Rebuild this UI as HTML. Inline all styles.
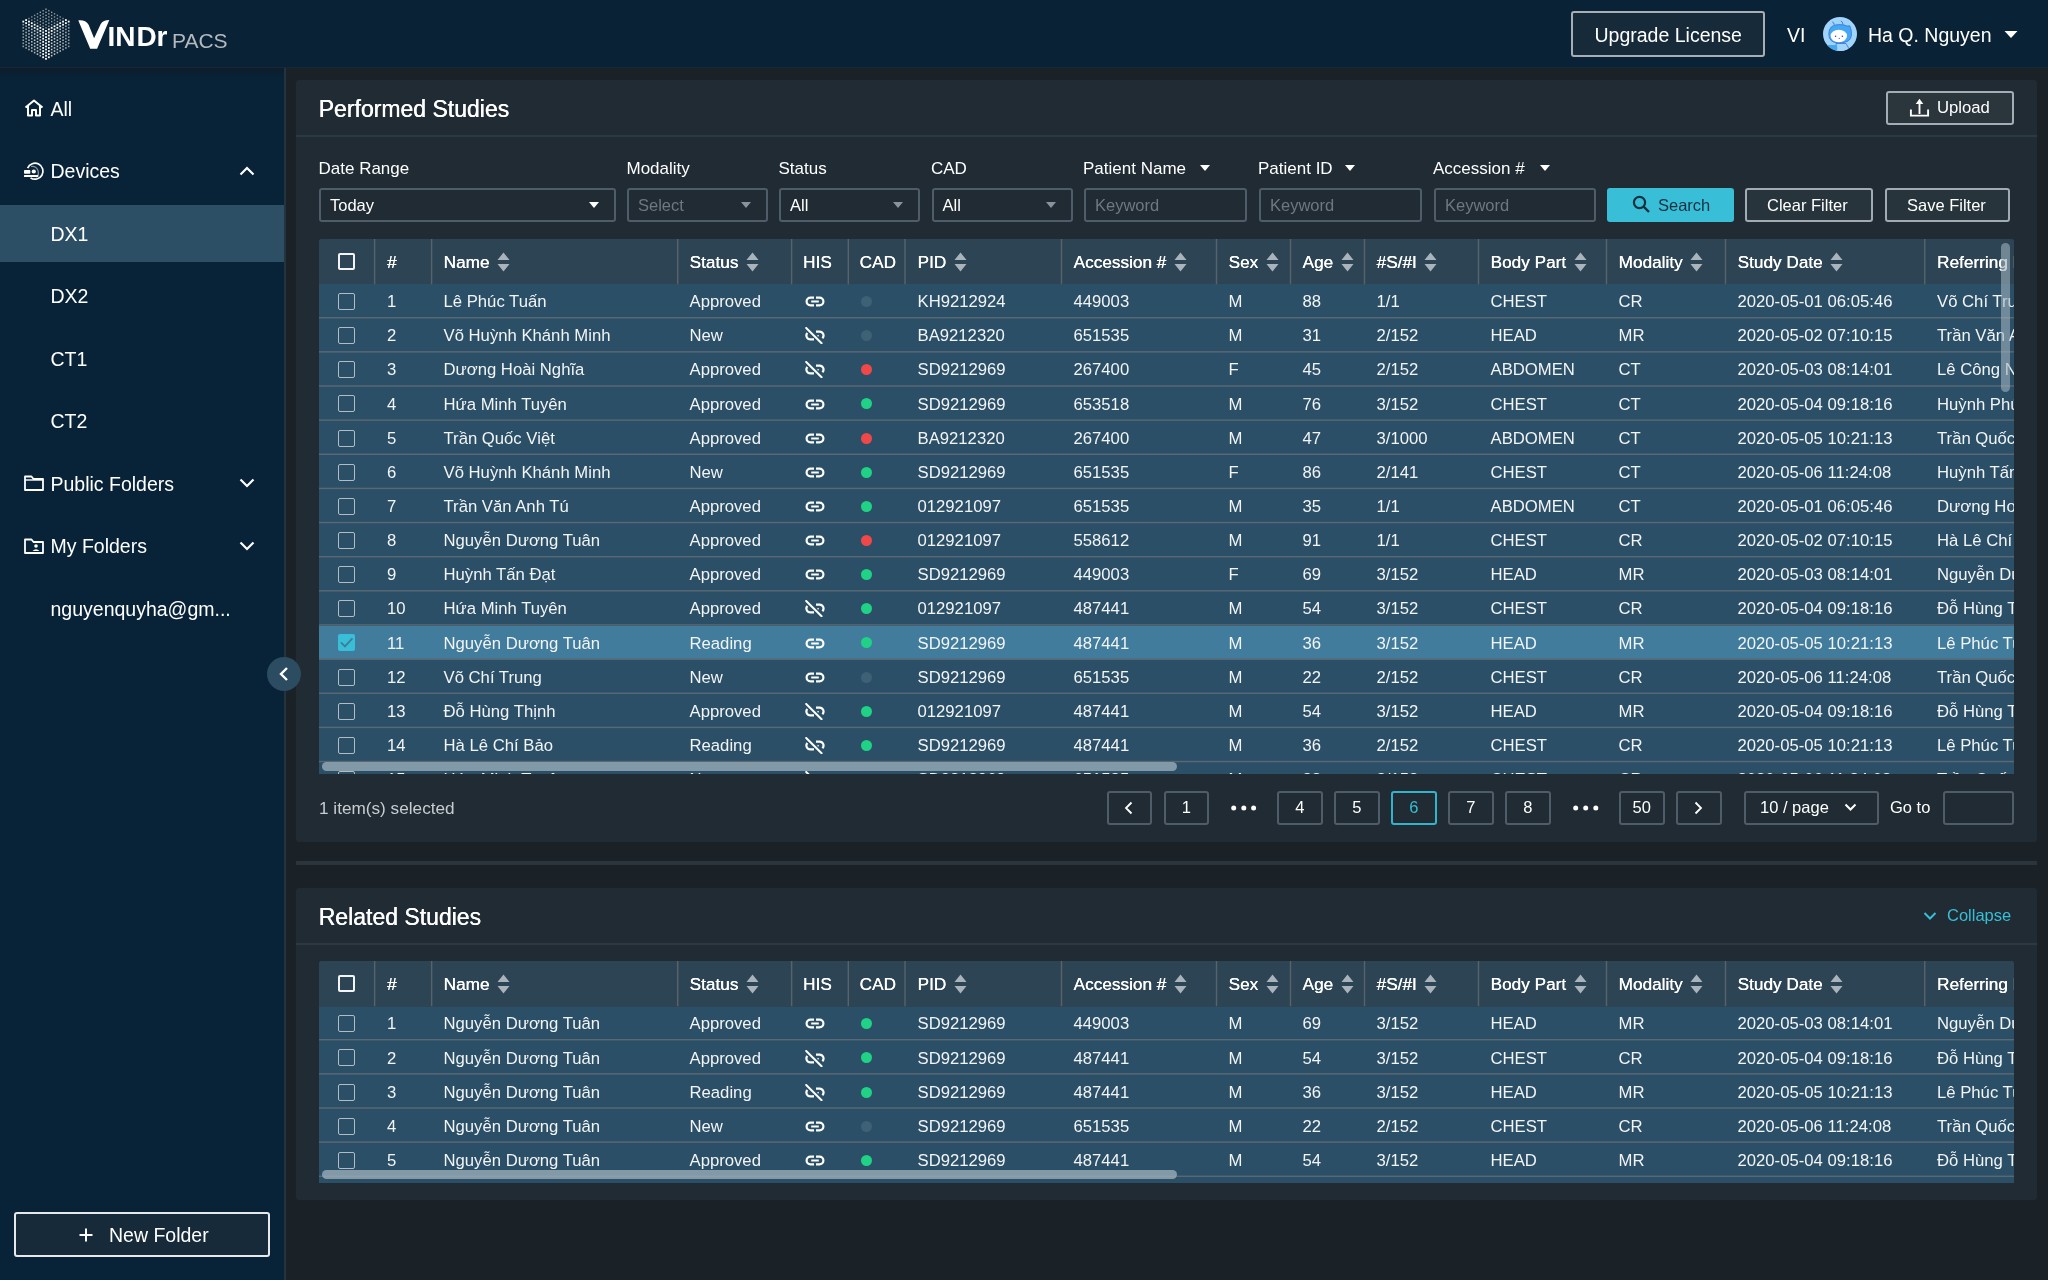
<!DOCTYPE html><html><head><meta charset="utf-8"><title>VinDr PACS</title><style>
*{box-sizing:border-box;margin:0;padding:0}
html,body{width:2048px;height:1280px;overflow:hidden;background:#1a2127;font-family:'Liberation Sans',sans-serif;color:#f2f4f6}
.a{position:absolute}
.t{position:absolute;white-space:nowrap;line-height:20px}
.hc{position:absolute;display:flex;align-items:center;white-space:nowrap;font-size:17.2px;text-shadow:0.35px 0 0 #fff;font-weight:400;color:#fff;line-height:20px}
.hc svg{margin-left:7.8px;flex:none}
.bt{position:absolute;white-space:nowrap;font-size:16.7px;line-height:20px;color:#f2f4f6}
</style></head><body><div id="root" style="position:absolute;left:0;top:0;width:2048px;height:1280px;overflow:hidden;will-change:transform"><div class="a" style="left:0;top:0;width:2048px;height:68px;background:#0a2235;border-bottom:1px solid #13293a"></div>
<svg class="a" style="left:0;top:0" width="80" height="68" viewBox="0 0 80 68"><rect x="22.38" y="20.70" width="1.80" height="1.80" fill="#fff" fill-opacity="1.00"/><rect x="22.48" y="23.90" width="1.60" height="1.60" fill="#fff" fill-opacity="0.56"/><rect x="22.48" y="27.00" width="1.60" height="1.60" fill="#fff" fill-opacity="0.55"/><rect x="22.48" y="30.10" width="1.60" height="1.60" fill="#fff" fill-opacity="0.55"/><rect x="22.48" y="33.20" width="1.60" height="1.60" fill="#fff" fill-opacity="0.55"/><rect x="22.48" y="36.30" width="1.60" height="1.60" fill="#fff" fill-opacity="0.55"/><rect x="22.48" y="39.40" width="1.60" height="1.60" fill="#fff" fill-opacity="0.55"/><rect x="22.48" y="42.50" width="1.60" height="1.60" fill="#fff" fill-opacity="0.55"/><rect x="22.48" y="45.60" width="1.60" height="1.60" fill="#fff" fill-opacity="0.55"/><rect x="25.22" y="19.15" width="1.80" height="1.80" fill="#fff" fill-opacity="1.00"/><rect x="25.22" y="22.25" width="1.80" height="1.80" fill="#fff" fill-opacity="1.00"/><rect x="25.32" y="25.45" width="1.60" height="1.60" fill="#fff" fill-opacity="0.61"/><rect x="25.32" y="28.55" width="1.60" height="1.60" fill="#fff" fill-opacity="0.60"/><rect x="25.32" y="31.65" width="1.60" height="1.60" fill="#fff" fill-opacity="0.60"/><rect x="25.32" y="34.75" width="1.60" height="1.60" fill="#fff" fill-opacity="0.60"/><rect x="25.32" y="37.85" width="1.60" height="1.60" fill="#fff" fill-opacity="0.60"/><rect x="25.32" y="40.95" width="1.60" height="1.60" fill="#fff" fill-opacity="0.59"/><rect x="25.32" y="44.05" width="1.60" height="1.60" fill="#fff" fill-opacity="0.59"/><rect x="25.32" y="47.15" width="1.60" height="1.60" fill="#fff" fill-opacity="0.59"/><rect x="28.26" y="17.80" width="1.40" height="1.40" fill="#fff" fill-opacity="0.49"/><rect x="28.06" y="20.70" width="1.80" height="1.80" fill="#fff" fill-opacity="1.00"/><rect x="28.06" y="23.80" width="1.80" height="1.80" fill="#fff" fill-opacity="1.00"/><rect x="28.16" y="27.00" width="1.60" height="1.60" fill="#fff" fill-opacity="0.66"/><rect x="28.16" y="30.10" width="1.60" height="1.60" fill="#fff" fill-opacity="0.65"/><rect x="28.16" y="33.20" width="1.60" height="1.60" fill="#fff" fill-opacity="0.65"/><rect x="28.16" y="36.30" width="1.60" height="1.60" fill="#fff" fill-opacity="0.64"/><rect x="28.16" y="39.40" width="1.60" height="1.60" fill="#fff" fill-opacity="0.64"/><rect x="28.16" y="42.50" width="1.60" height="1.60" fill="#fff" fill-opacity="0.63"/><rect x="28.16" y="45.60" width="1.60" height="1.60" fill="#fff" fill-opacity="0.63"/><rect x="28.16" y="48.70" width="1.60" height="1.60" fill="#fff" fill-opacity="0.62"/><rect x="31.10" y="16.25" width="1.40" height="1.40" fill="#fff" fill-opacity="0.51"/><rect x="31.10" y="19.35" width="1.40" height="1.40" fill="#fff" fill-opacity="0.51"/><rect x="30.90" y="22.25" width="1.80" height="1.80" fill="#fff" fill-opacity="1.00"/><rect x="30.90" y="25.35" width="1.80" height="1.80" fill="#fff" fill-opacity="1.00"/><rect x="31.00" y="28.55" width="1.60" height="1.60" fill="#fff" fill-opacity="0.71"/><rect x="31.00" y="31.65" width="1.60" height="1.60" fill="#fff" fill-opacity="0.70"/><rect x="31.00" y="34.75" width="1.60" height="1.60" fill="#fff" fill-opacity="0.69"/><rect x="31.00" y="37.85" width="1.60" height="1.60" fill="#fff" fill-opacity="0.69"/><rect x="31.00" y="40.95" width="1.60" height="1.60" fill="#fff" fill-opacity="0.68"/><rect x="31.00" y="44.05" width="1.60" height="1.60" fill="#fff" fill-opacity="0.67"/><rect x="31.00" y="47.15" width="1.60" height="1.60" fill="#fff" fill-opacity="0.66"/><rect x="31.00" y="50.25" width="1.60" height="1.60" fill="#fff" fill-opacity="0.65"/><rect x="33.94" y="14.70" width="1.40" height="1.40" fill="#fff" fill-opacity="0.53"/><rect x="33.94" y="17.80" width="1.40" height="1.40" fill="#fff" fill-opacity="0.53"/><rect x="33.94" y="20.90" width="1.40" height="1.40" fill="#fff" fill-opacity="0.53"/><rect x="33.74" y="23.80" width="1.80" height="1.80" fill="#fff" fill-opacity="1.00"/><rect x="33.74" y="26.90" width="1.80" height="1.80" fill="#fff" fill-opacity="1.00"/><rect x="33.84" y="30.10" width="1.60" height="1.60" fill="#fff" fill-opacity="0.76"/><rect x="33.84" y="33.20" width="1.60" height="1.60" fill="#fff" fill-opacity="0.75"/><rect x="33.84" y="36.30" width="1.60" height="1.60" fill="#fff" fill-opacity="0.74"/><rect x="33.84" y="39.40" width="1.60" height="1.60" fill="#fff" fill-opacity="0.73"/><rect x="33.84" y="42.50" width="1.60" height="1.60" fill="#fff" fill-opacity="0.72"/><rect x="33.84" y="45.60" width="1.60" height="1.60" fill="#fff" fill-opacity="0.71"/><rect x="33.84" y="48.70" width="1.60" height="1.60" fill="#fff" fill-opacity="0.70"/><rect x="33.84" y="51.80" width="1.60" height="1.60" fill="#fff" fill-opacity="0.69"/><rect x="36.78" y="13.15" width="1.40" height="1.40" fill="#fff" fill-opacity="0.54"/><rect x="36.78" y="16.25" width="1.40" height="1.40" fill="#fff" fill-opacity="0.54"/><rect x="36.78" y="19.35" width="1.40" height="1.40" fill="#fff" fill-opacity="0.54"/><rect x="36.78" y="22.45" width="1.40" height="1.40" fill="#fff" fill-opacity="0.54"/><rect x="36.58" y="25.35" width="1.80" height="1.80" fill="#fff" fill-opacity="1.00"/><rect x="36.58" y="28.45" width="1.80" height="1.80" fill="#fff" fill-opacity="1.00"/><rect x="36.68" y="31.65" width="1.60" height="1.60" fill="#fff" fill-opacity="0.81"/><rect x="36.68" y="34.75" width="1.60" height="1.60" fill="#fff" fill-opacity="0.80"/><rect x="36.68" y="37.85" width="1.60" height="1.60" fill="#fff" fill-opacity="0.78"/><rect x="36.68" y="40.95" width="1.60" height="1.60" fill="#fff" fill-opacity="0.77"/><rect x="36.68" y="44.05" width="1.60" height="1.60" fill="#fff" fill-opacity="0.76"/><rect x="36.68" y="47.15" width="1.60" height="1.60" fill="#fff" fill-opacity="0.75"/><rect x="36.68" y="50.25" width="1.60" height="1.60" fill="#fff" fill-opacity="0.73"/><rect x="36.68" y="53.35" width="1.60" height="1.60" fill="#fff" fill-opacity="0.72"/><rect x="39.62" y="11.60" width="1.40" height="1.40" fill="#fff" fill-opacity="0.56"/><rect x="39.62" y="14.70" width="1.40" height="1.40" fill="#fff" fill-opacity="0.56"/><rect x="39.62" y="17.80" width="1.40" height="1.40" fill="#fff" fill-opacity="0.56"/><rect x="39.62" y="20.90" width="1.40" height="1.40" fill="#fff" fill-opacity="0.56"/><rect x="39.62" y="24.00" width="1.40" height="1.40" fill="#fff" fill-opacity="0.56"/><rect x="39.42" y="26.90" width="1.80" height="1.80" fill="#fff" fill-opacity="1.00"/><rect x="39.42" y="30.00" width="1.80" height="1.80" fill="#fff" fill-opacity="1.00"/><rect x="39.52" y="33.20" width="1.60" height="1.60" fill="#fff" fill-opacity="0.86"/><rect x="39.52" y="36.30" width="1.60" height="1.60" fill="#fff" fill-opacity="0.85"/><rect x="39.52" y="39.40" width="1.60" height="1.60" fill="#fff" fill-opacity="0.83"/><rect x="39.52" y="42.50" width="1.60" height="1.60" fill="#fff" fill-opacity="0.81"/><rect x="39.52" y="45.60" width="1.60" height="1.60" fill="#fff" fill-opacity="0.80"/><rect x="39.52" y="48.70" width="1.60" height="1.60" fill="#fff" fill-opacity="0.78"/><rect x="39.52" y="51.80" width="1.60" height="1.60" fill="#fff" fill-opacity="0.77"/><rect x="39.52" y="54.90" width="1.60" height="1.60" fill="#fff" fill-opacity="0.75"/><rect x="42.46" y="10.05" width="1.40" height="1.40" fill="#fff" fill-opacity="0.58"/><rect x="42.46" y="13.15" width="1.40" height="1.40" fill="#fff" fill-opacity="0.58"/><rect x="42.46" y="16.25" width="1.40" height="1.40" fill="#fff" fill-opacity="0.58"/><rect x="42.46" y="19.35" width="1.40" height="1.40" fill="#fff" fill-opacity="0.58"/><rect x="42.46" y="22.45" width="1.40" height="1.40" fill="#fff" fill-opacity="0.58"/><rect x="42.46" y="25.55" width="1.40" height="1.40" fill="#fff" fill-opacity="0.58"/><rect x="42.26" y="28.45" width="1.80" height="1.80" fill="#fff" fill-opacity="1.00"/><rect x="42.26" y="31.55" width="1.80" height="1.80" fill="#fff" fill-opacity="1.00"/><rect x="42.26" y="34.65" width="1.80" height="1.80" fill="#fff" fill-opacity="1.00"/><rect x="42.26" y="37.75" width="1.80" height="1.80" fill="#fff" fill-opacity="1.00"/><rect x="42.26" y="40.85" width="1.80" height="1.80" fill="#fff" fill-opacity="1.00"/><rect x="42.26" y="43.95" width="1.80" height="1.80" fill="#fff" fill-opacity="1.00"/><rect x="42.26" y="47.05" width="1.80" height="1.80" fill="#fff" fill-opacity="1.00"/><rect x="42.26" y="50.15" width="1.80" height="1.80" fill="#fff" fill-opacity="1.00"/><rect x="42.26" y="53.25" width="1.80" height="1.80" fill="#fff" fill-opacity="1.00"/><rect x="42.26" y="56.35" width="1.80" height="1.80" fill="#fff" fill-opacity="1.00"/><rect x="45.30" y="8.50" width="1.40" height="1.40" fill="#fff" fill-opacity="0.60"/><rect x="45.30" y="11.60" width="1.40" height="1.40" fill="#fff" fill-opacity="0.60"/><rect x="45.30" y="14.70" width="1.40" height="1.40" fill="#fff" fill-opacity="0.60"/><rect x="45.30" y="17.80" width="1.40" height="1.40" fill="#fff" fill-opacity="0.60"/><rect x="45.30" y="20.90" width="1.40" height="1.40" fill="#fff" fill-opacity="0.60"/><rect x="45.30" y="24.00" width="1.40" height="1.40" fill="#fff" fill-opacity="0.60"/><rect x="45.30" y="27.10" width="1.40" height="1.40" fill="#fff" fill-opacity="0.60"/><rect x="45.10" y="30.00" width="1.80" height="1.80" fill="#fff" fill-opacity="1.00"/><rect x="45.10" y="33.10" width="1.80" height="1.80" fill="#fff" fill-opacity="1.00"/><rect x="45.10" y="36.20" width="1.80" height="1.80" fill="#fff" fill-opacity="1.00"/><rect x="45.10" y="39.30" width="1.80" height="1.80" fill="#fff" fill-opacity="1.00"/><rect x="45.10" y="42.40" width="1.80" height="1.80" fill="#fff" fill-opacity="1.00"/><rect x="45.10" y="45.50" width="1.80" height="1.80" fill="#fff" fill-opacity="1.00"/><rect x="45.10" y="48.60" width="1.80" height="1.80" fill="#fff" fill-opacity="1.00"/><rect x="45.10" y="51.70" width="1.80" height="1.80" fill="#fff" fill-opacity="1.00"/><rect x="45.10" y="54.80" width="1.80" height="1.80" fill="#fff" fill-opacity="1.00"/><rect x="45.10" y="57.90" width="1.80" height="1.80" fill="#fff" fill-opacity="1.00"/><rect x="48.14" y="10.05" width="1.40" height="1.40" fill="#fff" fill-opacity="0.58"/><rect x="48.14" y="13.15" width="1.40" height="1.40" fill="#fff" fill-opacity="0.58"/><rect x="48.14" y="16.25" width="1.40" height="1.40" fill="#fff" fill-opacity="0.58"/><rect x="48.14" y="19.35" width="1.40" height="1.40" fill="#fff" fill-opacity="0.58"/><rect x="48.14" y="22.45" width="1.40" height="1.40" fill="#fff" fill-opacity="0.58"/><rect x="48.14" y="25.55" width="1.40" height="1.40" fill="#fff" fill-opacity="0.58"/><rect x="47.94" y="28.45" width="1.80" height="1.80" fill="#fff" fill-opacity="1.00"/><rect x="47.94" y="31.55" width="1.80" height="1.80" fill="#fff" fill-opacity="1.00"/><rect x="47.94" y="34.65" width="1.80" height="1.80" fill="#fff" fill-opacity="1.00"/><rect x="47.94" y="37.75" width="1.80" height="1.80" fill="#fff" fill-opacity="1.00"/><rect x="47.94" y="40.85" width="1.80" height="1.80" fill="#fff" fill-opacity="1.00"/><rect x="47.94" y="43.95" width="1.80" height="1.80" fill="#fff" fill-opacity="1.00"/><rect x="47.94" y="47.05" width="1.80" height="1.80" fill="#fff" fill-opacity="1.00"/><rect x="47.94" y="50.15" width="1.80" height="1.80" fill="#fff" fill-opacity="1.00"/><rect x="47.94" y="53.25" width="1.80" height="1.80" fill="#fff" fill-opacity="1.00"/><rect x="47.94" y="56.35" width="1.80" height="1.80" fill="#fff" fill-opacity="1.00"/><rect x="50.98" y="11.60" width="1.40" height="1.40" fill="#fff" fill-opacity="0.56"/><rect x="50.98" y="14.70" width="1.40" height="1.40" fill="#fff" fill-opacity="0.56"/><rect x="50.98" y="17.80" width="1.40" height="1.40" fill="#fff" fill-opacity="0.56"/><rect x="50.98" y="20.90" width="1.40" height="1.40" fill="#fff" fill-opacity="0.56"/><rect x="50.98" y="24.00" width="1.40" height="1.40" fill="#fff" fill-opacity="0.56"/><rect x="50.78" y="26.90" width="1.80" height="1.80" fill="#fff" fill-opacity="1.00"/><rect x="50.78" y="30.00" width="1.80" height="1.80" fill="#fff" fill-opacity="1.00"/><rect x="50.88" y="33.20" width="1.60" height="1.60" fill="#fff" fill-opacity="0.86"/><rect x="50.88" y="36.30" width="1.60" height="1.60" fill="#fff" fill-opacity="0.85"/><rect x="50.88" y="39.40" width="1.60" height="1.60" fill="#fff" fill-opacity="0.83"/><rect x="50.88" y="42.50" width="1.60" height="1.60" fill="#fff" fill-opacity="0.81"/><rect x="50.88" y="45.60" width="1.60" height="1.60" fill="#fff" fill-opacity="0.80"/><rect x="50.88" y="48.70" width="1.60" height="1.60" fill="#fff" fill-opacity="0.78"/><rect x="50.88" y="51.80" width="1.60" height="1.60" fill="#fff" fill-opacity="0.77"/><rect x="50.88" y="54.90" width="1.60" height="1.60" fill="#fff" fill-opacity="0.75"/><rect x="53.82" y="13.15" width="1.40" height="1.40" fill="#fff" fill-opacity="0.54"/><rect x="53.82" y="16.25" width="1.40" height="1.40" fill="#fff" fill-opacity="0.54"/><rect x="53.82" y="19.35" width="1.40" height="1.40" fill="#fff" fill-opacity="0.54"/><rect x="53.82" y="22.45" width="1.40" height="1.40" fill="#fff" fill-opacity="0.54"/><rect x="53.62" y="25.35" width="1.80" height="1.80" fill="#fff" fill-opacity="1.00"/><rect x="53.62" y="28.45" width="1.80" height="1.80" fill="#fff" fill-opacity="1.00"/><rect x="53.72" y="31.65" width="1.60" height="1.60" fill="#fff" fill-opacity="0.81"/><rect x="53.72" y="34.75" width="1.60" height="1.60" fill="#fff" fill-opacity="0.80"/><rect x="53.72" y="37.85" width="1.60" height="1.60" fill="#fff" fill-opacity="0.78"/><rect x="53.72" y="40.95" width="1.60" height="1.60" fill="#fff" fill-opacity="0.77"/><rect x="53.72" y="44.05" width="1.60" height="1.60" fill="#fff" fill-opacity="0.76"/><rect x="53.72" y="47.15" width="1.60" height="1.60" fill="#fff" fill-opacity="0.75"/><rect x="53.72" y="50.25" width="1.60" height="1.60" fill="#fff" fill-opacity="0.73"/><rect x="53.72" y="53.35" width="1.60" height="1.60" fill="#fff" fill-opacity="0.72"/><rect x="56.66" y="14.70" width="1.40" height="1.40" fill="#fff" fill-opacity="0.53"/><rect x="56.66" y="17.80" width="1.40" height="1.40" fill="#fff" fill-opacity="0.53"/><rect x="56.66" y="20.90" width="1.40" height="1.40" fill="#fff" fill-opacity="0.53"/><rect x="56.46" y="23.80" width="1.80" height="1.80" fill="#fff" fill-opacity="1.00"/><rect x="56.46" y="26.90" width="1.80" height="1.80" fill="#fff" fill-opacity="1.00"/><rect x="56.56" y="30.10" width="1.60" height="1.60" fill="#fff" fill-opacity="0.76"/><rect x="56.56" y="33.20" width="1.60" height="1.60" fill="#fff" fill-opacity="0.75"/><rect x="56.56" y="36.30" width="1.60" height="1.60" fill="#fff" fill-opacity="0.74"/><rect x="56.56" y="39.40" width="1.60" height="1.60" fill="#fff" fill-opacity="0.73"/><rect x="56.56" y="42.50" width="1.60" height="1.60" fill="#fff" fill-opacity="0.72"/><rect x="56.56" y="45.60" width="1.60" height="1.60" fill="#fff" fill-opacity="0.71"/><rect x="56.56" y="48.70" width="1.60" height="1.60" fill="#fff" fill-opacity="0.70"/><rect x="56.56" y="51.80" width="1.60" height="1.60" fill="#fff" fill-opacity="0.69"/><rect x="59.50" y="16.25" width="1.40" height="1.40" fill="#fff" fill-opacity="0.51"/><rect x="59.50" y="19.35" width="1.40" height="1.40" fill="#fff" fill-opacity="0.51"/><rect x="59.30" y="22.25" width="1.80" height="1.80" fill="#fff" fill-opacity="1.00"/><rect x="59.30" y="25.35" width="1.80" height="1.80" fill="#fff" fill-opacity="1.00"/><rect x="59.40" y="28.55" width="1.60" height="1.60" fill="#fff" fill-opacity="0.71"/><rect x="59.40" y="31.65" width="1.60" height="1.60" fill="#fff" fill-opacity="0.70"/><rect x="59.40" y="34.75" width="1.60" height="1.60" fill="#fff" fill-opacity="0.69"/><rect x="59.40" y="37.85" width="1.60" height="1.60" fill="#fff" fill-opacity="0.69"/><rect x="59.40" y="40.95" width="1.60" height="1.60" fill="#fff" fill-opacity="0.68"/><rect x="59.40" y="44.05" width="1.60" height="1.60" fill="#fff" fill-opacity="0.67"/><rect x="59.40" y="47.15" width="1.60" height="1.60" fill="#fff" fill-opacity="0.66"/><rect x="59.40" y="50.25" width="1.60" height="1.60" fill="#fff" fill-opacity="0.65"/><rect x="62.34" y="17.80" width="1.40" height="1.40" fill="#fff" fill-opacity="0.49"/><rect x="62.14" y="20.70" width="1.80" height="1.80" fill="#fff" fill-opacity="1.00"/><rect x="62.14" y="23.80" width="1.80" height="1.80" fill="#fff" fill-opacity="1.00"/><rect x="62.24" y="27.00" width="1.60" height="1.60" fill="#fff" fill-opacity="0.66"/><rect x="62.24" y="30.10" width="1.60" height="1.60" fill="#fff" fill-opacity="0.65"/><rect x="62.24" y="33.20" width="1.60" height="1.60" fill="#fff" fill-opacity="0.65"/><rect x="62.24" y="36.30" width="1.60" height="1.60" fill="#fff" fill-opacity="0.64"/><rect x="62.24" y="39.40" width="1.60" height="1.60" fill="#fff" fill-opacity="0.64"/><rect x="62.24" y="42.50" width="1.60" height="1.60" fill="#fff" fill-opacity="0.63"/><rect x="62.24" y="45.60" width="1.60" height="1.60" fill="#fff" fill-opacity="0.63"/><rect x="62.24" y="48.70" width="1.60" height="1.60" fill="#fff" fill-opacity="0.62"/><rect x="64.98" y="19.15" width="1.80" height="1.80" fill="#fff" fill-opacity="1.00"/><rect x="64.98" y="22.25" width="1.80" height="1.80" fill="#fff" fill-opacity="1.00"/><rect x="65.08" y="25.45" width="1.60" height="1.60" fill="#fff" fill-opacity="0.61"/><rect x="65.08" y="28.55" width="1.60" height="1.60" fill="#fff" fill-opacity="0.60"/><rect x="65.08" y="31.65" width="1.60" height="1.60" fill="#fff" fill-opacity="0.60"/><rect x="65.08" y="34.75" width="1.60" height="1.60" fill="#fff" fill-opacity="0.60"/><rect x="65.08" y="37.85" width="1.60" height="1.60" fill="#fff" fill-opacity="0.60"/><rect x="65.08" y="40.95" width="1.60" height="1.60" fill="#fff" fill-opacity="0.59"/><rect x="65.08" y="44.05" width="1.60" height="1.60" fill="#fff" fill-opacity="0.59"/><rect x="65.08" y="47.15" width="1.60" height="1.60" fill="#fff" fill-opacity="0.59"/><rect x="67.82" y="20.70" width="1.80" height="1.80" fill="#fff" fill-opacity="1.00"/><rect x="67.92" y="23.90" width="1.60" height="1.60" fill="#fff" fill-opacity="0.56"/><rect x="67.92" y="27.00" width="1.60" height="1.60" fill="#fff" fill-opacity="0.55"/><rect x="67.92" y="30.10" width="1.60" height="1.60" fill="#fff" fill-opacity="0.55"/><rect x="67.92" y="33.20" width="1.60" height="1.60" fill="#fff" fill-opacity="0.55"/><rect x="67.92" y="36.30" width="1.60" height="1.60" fill="#fff" fill-opacity="0.55"/><rect x="67.92" y="39.40" width="1.60" height="1.60" fill="#fff" fill-opacity="0.55"/><rect x="67.92" y="42.50" width="1.60" height="1.60" fill="#fff" fill-opacity="0.55"/><rect x="67.92" y="45.60" width="1.60" height="1.60" fill="#fff" fill-opacity="0.55"/></svg>
<svg class="a" style="left:0;top:0" width="110" height="60" viewBox="0 0 110 60"><path d="M78.3 20.4 C82.8 19.9 86.6 21.2 88.6 24.8 L94.1 38.2 L100.6 24.2 C102.3 21.4 105.2 20.3 109.3 20.1 L97.1 48.7 L90.2 48.7 Z" fill="#fff"/></svg>
<div class="t" style="left:107.5px;top:22px;font-size:28px;line-height:30px;font-weight:700;color:#fff">I</div>
<div class="t" style="left:115.3px;top:22px;font-size:28px;line-height:30px;font-weight:700;color:#fff">N</div>
<div class="t" style="left:136.6px;top:22px;font-size:28px;line-height:30px;font-weight:700;color:#fff">D</div>
<div class="t" style="left:156.6px;top:22px;font-size:28px;line-height:30px;font-weight:700;color:#fff">r</div>
<div class="t" style="left:172px;top:29px;font-size:21px;line-height:24px;color:#b3b9be;letter-spacing:0px">PACS</div>
<div class="a" style="left:1571px;top:11px;width:194px;height:46px;border:2px solid #a7afb5;border-radius:3px;background:#172a3a"></div>
<div class="t" style="left:1594.5px;top:24px;font-size:19.5px;line-height:22px;color:#fff">Upgrade License</div>
<div class="t" style="left:1787px;top:24px;font-size:19.5px;line-height:22px;color:#fff">VI</div>
<div class="a" style="left:1823.2px;top:17px;width:34px;height:34px;border-radius:50%;overflow:hidden;background:#a0d4fb"><svg class="a" style="left:-1.2px;top:-1px" width="36" height="36" viewBox="0 0 36 36">
<path d="M14 27.5 L24 27.5 Q27 31 27.5 37 L14.5 37Z" fill="#a0d4fb" stroke="#3a72d4" stroke-width="0.8"/>
<path d="M3 29 L15 29 L15.5 37 L3 37Z" fill="#45a8f4"/>
<path d="M6.8 18 Q6.8 8.8 16.5 8.6 Q22 8.4 25 10 L27.8 9.8 Q29.8 14 29.5 19 Q29 27 17 27 Q6.8 27 6.8 18Z" fill="#45a8f4" stroke="#3a72d4" stroke-width="0.8"/>
<ellipse cx="16.8" cy="20" rx="8.2" ry="6.2" fill="#fff"/>
<circle cx="13.6" cy="20.3" r="0.8" fill="#3050b0"/><circle cx="20.4" cy="20.3" r="0.8" fill="#3050b0"/><circle cx="17.2" cy="22.3" r="0.6" fill="#3050b0"/>
<path d="M10.2 6 Q12 6.3 12.3 8.8 M18.8 5 Q20.6 5.3 21 8.5" stroke="#3a72d4" stroke-width="0.9" fill="none"/>
</svg></div>
<div class="t" style="left:1868px;top:24px;font-size:19.5px;line-height:22px;color:#fff">Ha Q. Nguyen</div>
<svg class="a" style="left:2004px;top:30px" width="14" height="9" viewBox="0 0 14 9"><path d="M0.5 1 L13.5 1 L7 8Z" fill="#fff"/></svg>
<div class="a" style="left:0;top:68px;width:284px;height:1212px;background:#082338"></div>
<div class="a" style="left:284px;top:68px;width:2px;height:1212px;background:#25333d"></div>
<div class="a" style="left:0;top:205px;width:284px;height:57px;background:#2c4f66"></div>
<div class="a" style="left:0;top:68px;width:284px;height:10px;background:linear-gradient(rgba(14,28,40,0.9),rgba(14,28,40,0))"></div>
<div class="t" style="left:50.5px;top:97.6px;font-size:19.5px;line-height:22px;color:#fff">All</div>
<svg class="a" style="left:24px;top:99.0px" width="20" height="18" viewBox="0 0 20 18"><path d="M1.5 8.5 L10 1.5 L18.5 8.5 M4 6.8 V16.5 H8 V11 H12 V16.5 H16 V6.8" fill="none" stroke="#fff" stroke-width="2" stroke-linejoin="round"/></svg>
<div class="t" style="left:50.5px;top:160.1px;font-size:19.5px;line-height:22px;color:#fff">Devices</div>
<svg class="a" style="left:20px;top:157.5px" width="30" height="26" viewBox="0 0 30 26"><path d="M7.64 10.07 A8 8 0 1 1 10.53 19.83" fill="none" stroke="#fff" stroke-width="1.7"/><path d="M11 8.45 A6.2 6.2 0 0 1 16.1 19.3" fill="none" stroke="#fff" stroke-opacity="0.5" stroke-width="1.3"/><circle cx="13.8" cy="13.5" r="2.1" fill="#fff"/><rect x="4" y="12" width="6.3" height="3.7" rx="0.8" fill="#fff"/><rect x="4" y="17" width="14.3" height="1.9" rx="0.5" fill="#fff"/></svg>
<svg class="a" style="left:239px;top:165.5px" width="16" height="10" viewBox="0 0 16 10"><path d="M1.5 8.5 L8 2 L14.5 8.5" fill="none" stroke="#fff" stroke-width="2.2"/></svg>
<div class="t" style="left:50.5px;top:222.6px;font-size:19.5px;line-height:22px;color:#fff">DX1</div>
<div class="t" style="left:50.5px;top:285.1px;font-size:19.5px;line-height:22px;color:#fff">DX2</div>
<div class="t" style="left:50.5px;top:347.6px;font-size:19.5px;line-height:22px;color:#fff">CT1</div>
<div class="t" style="left:50.5px;top:410.1px;font-size:19.5px;line-height:22px;color:#fff">CT2</div>
<div class="t" style="left:50.5px;top:472.6px;font-size:19.5px;line-height:22px;color:#fff">Public Folders</div>
<svg class="a" style="left:24px;top:475.0px" width="20" height="16" viewBox="0 0 20 16"><path d="M1 1.5 H7.5 L9.5 4 H19 V15 H1 Z" fill="none" stroke="#fff" stroke-width="1.8" stroke-linejoin="round"/><path d="M1 5 H19" stroke="#fff" stroke-width="1.4"/></svg>
<svg class="a" style="left:239px;top:478.0px" width="16" height="10" viewBox="0 0 16 10"><path d="M1.5 1.5 L8 8 L14.5 1.5" fill="none" stroke="#fff" stroke-width="2.2"/></svg>
<div class="t" style="left:50.5px;top:535.1px;font-size:19.5px;line-height:22px;color:#fff">My Folders</div>
<svg class="a" style="left:24px;top:537.5px" width="20" height="16" viewBox="0 0 20 16"><path d="M1 1.5 H7.5 L9.5 4 H19 V15 H1 Z" fill="none" stroke="#fff" stroke-width="1.8" stroke-linejoin="round"/><circle cx="12" cy="8" r="1.8" fill="#fff"/><path d="M8.5 13 Q12 9.5 15.5 13Z" fill="#fff"/></svg>
<svg class="a" style="left:239px;top:540.5px" width="16" height="10" viewBox="0 0 16 10"><path d="M1.5 1.5 L8 8 L14.5 1.5" fill="none" stroke="#fff" stroke-width="2.2"/></svg>
<div class="t" style="left:50.5px;top:597.6px;font-size:19.5px;line-height:22px;color:#fff">nguyenquyha@gm...</div>
<div class="a" style="left:296px;top:80px;width:1741px;height:762px;background:#202b33;border-radius:3px"></div>
<div class="a" style="left:296px;top:135px;width:1741px;height:2px;background:#2b3942"></div>
<div class="t" style="left:318.5px;top:96.5px;font-size:23px;line-height:24px;font-weight:400;text-shadow:0.45px 0 0 #fff;color:#fff">Performed Studies</div>
<div class="a" style="left:1886px;top:91px;width:128px;height:34px;border:2px solid #a3adb5;border-radius:3px;background:#2a353c"></div>
<svg class="a" style="left:1909px;top:98px" width="21" height="20" viewBox="0 0 21 20"><path d="M10.5 16 V5.5" fill="none" stroke="#fff" stroke-width="1.9"/><path d="M10.5 0.8 L14.3 6 H6.7Z" fill="#fff"/><path d="M1.9 11.5 V17.6 H19.1 V11.5" fill="none" stroke="#fff" stroke-width="1.9"/></svg>
<div class="t" style="left:1937px;top:98px;font-size:16.7px;line-height:20px;color:#fff">Upload</div>
<div class="t" style="left:318.5px;top:158.5px;font-size:17px;color:#fff">Date Range</div>
<div class="t" style="left:626.5px;top:158.5px;font-size:17px;color:#fff">Modality</div>
<div class="t" style="left:778.5px;top:158.5px;font-size:17px;color:#fff">Status</div>
<div class="t" style="left:931px;top:158.5px;font-size:17px;color:#fff">CAD</div>
<div class="t" style="left:1083px;top:158.5px;font-size:17px;color:#fff">Patient Name</div>
<svg class="a" style="left:1200px;top:165px" width="10" height="6" viewBox="0 0 10 6"><path d="M0 0 H10 L5 6Z" fill="#fff"/></svg>
<div class="t" style="left:1258px;top:158.5px;font-size:17px;color:#fff">Patient ID</div>
<svg class="a" style="left:1345px;top:165px" width="10" height="6" viewBox="0 0 10 6"><path d="M0 0 H10 L5 6Z" fill="#fff"/></svg>
<div class="t" style="left:1433px;top:158.5px;font-size:17px;color:#fff">Accession #</div>
<svg class="a" style="left:1540px;top:165px" width="10" height="6" viewBox="0 0 10 6"><path d="M0 0 H10 L5 6Z" fill="#fff"/></svg>
<div class="a" style="left:319px;top:188px;width:297px;height:34px;border:2px solid #4f5c69;border-radius:3px"></div>
<div class="t" style="left:330px;top:195px;font-size:16.5px;color:#fff">Today</div>
<svg class="a" style="left:589px;top:202px" width="10" height="6" viewBox="0 0 10 6"><path d="M0 0 H10 L5 6Z" fill="#fff"/></svg>
<div class="a" style="left:627px;top:188px;width:141px;height:34px;border:2px solid #4f5c69;border-radius:3px"></div>
<div class="t" style="left:638px;top:195px;font-size:16.5px;color:#6d7880">Select</div>
<svg class="a" style="left:741px;top:202px" width="10" height="6" viewBox="0 0 10 6"><path d="M0 0 H10 L5 6Z" fill="#8a939a"/></svg>
<div class="a" style="left:779px;top:188px;width:141px;height:34px;border:2px solid #4f5c69;border-radius:3px"></div>
<div class="t" style="left:790px;top:195px;font-size:16.5px;color:#fff">All</div>
<svg class="a" style="left:893px;top:202px" width="10" height="6" viewBox="0 0 10 6"><path d="M0 0 H10 L5 6Z" fill="#8a939a"/></svg>
<div class="a" style="left:931.5px;top:188px;width:141px;height:34px;border:2px solid #4f5c69;border-radius:3px"></div>
<div class="t" style="left:942.5px;top:195px;font-size:16.5px;color:#fff">All</div>
<svg class="a" style="left:1045.5px;top:202px" width="10" height="6" viewBox="0 0 10 6"><path d="M0 0 H10 L5 6Z" fill="#8a939a"/></svg>
<div class="a" style="left:1084px;top:188px;width:163px;height:34px;border:2px solid #4f5c69;border-radius:3px"></div>
<div class="t" style="left:1095px;top:195px;font-size:16.5px;color:#6d7880">Keyword</div>
<div class="a" style="left:1259px;top:188px;width:163px;height:34px;border:2px solid #4f5c69;border-radius:3px"></div>
<div class="t" style="left:1270px;top:195px;font-size:16.5px;color:#6d7880">Keyword</div>
<div class="a" style="left:1434px;top:188px;width:162px;height:34px;border:2px solid #4f5c69;border-radius:3px"></div>
<div class="t" style="left:1445px;top:195px;font-size:16.5px;color:#6d7880">Keyword</div>
<div class="a" style="left:1607px;top:188px;width:127px;height:34px;background:#38bfd7;border-radius:3px"></div>
<svg class="a" style="left:1632px;top:195px" width="19" height="19" viewBox="0 0 19 19"><circle cx="7.5" cy="7.5" r="5.6" fill="none" stroke="#173040" stroke-width="2.2"/><path d="M11.6 11.6 L17 17" stroke="#173040" stroke-width="2.4"/></svg>
<div class="t" style="left:1658px;top:195px;font-size:16.5px;color:#173040">Search</div>
<div class="a" style="left:1745px;top:188px;width:128px;height:34px;border:2px solid #a2abb2;border-radius:3px;background:#28343b"></div>
<div class="t" style="left:1767px;top:195px;font-size:16.5px;color:#fff">Clear Filter</div>
<div class="a" style="left:1884.5px;top:188px;width:125.5px;height:34px;border:2px solid #a2abb2;border-radius:3px;background:#28343b"></div>
<div class="t" style="left:1907px;top:195px;font-size:16.5px;color:#fff">Save Filter</div>
<div class="a" style="left:319px;top:239px;width:1695px;height:535px;overflow:hidden;border-radius:3px 3px 0 0;background:#2a4f66">
<div class="a" style="left:0;top:0;width:1695px;height:45.3px;background:#2c4453"></div>
<div class="a" style="left:19.19999999999999px;top:14.1px;width:17px;height:17px;border:2px solid #f2f4f6;border-radius:2px"></div>
<div class="hc" style="left:68px;top:12.6px">#</div>
<div class="hc" style="left:124.5px;top:12.6px">Name<svg width="13" height="20" viewBox="0 0 13 20"><path d="M6.5 0.5 L12.5 8 H0.5Z M6.5 19.5 L12.5 12 H0.5Z" fill="#a9b3bc"/></svg></div>
<div class="hc" style="left:370.5px;top:12.6px">Status<svg width="13" height="20" viewBox="0 0 13 20"><path d="M6.5 0.5 L12.5 8 H0.5Z M6.5 19.5 L12.5 12 H0.5Z" fill="#a9b3bc"/></svg></div>
<div class="hc" style="left:484px;top:12.6px">HIS</div>
<div class="hc" style="left:540.5px;top:12.6px">CAD</div>
<div class="hc" style="left:598.5px;top:12.6px">PID<svg width="13" height="20" viewBox="0 0 13 20"><path d="M6.5 0.5 L12.5 8 H0.5Z M6.5 19.5 L12.5 12 H0.5Z" fill="#a9b3bc"/></svg></div>
<div class="hc" style="left:754.5px;top:12.6px">Accession #<svg width="13" height="20" viewBox="0 0 13 20"><path d="M6.5 0.5 L12.5 8 H0.5Z M6.5 19.5 L12.5 12 H0.5Z" fill="#a9b3bc"/></svg></div>
<div class="hc" style="left:909.5px;top:12.6px">Sex<svg width="13" height="20" viewBox="0 0 13 20"><path d="M6.5 0.5 L12.5 8 H0.5Z M6.5 19.5 L12.5 12 H0.5Z" fill="#a9b3bc"/></svg></div>
<div class="hc" style="left:983.5px;top:12.6px">Age<svg width="13" height="20" viewBox="0 0 13 20"><path d="M6.5 0.5 L12.5 8 H0.5Z M6.5 19.5 L12.5 12 H0.5Z" fill="#a9b3bc"/></svg></div>
<div class="hc" style="left:1057.5px;top:12.6px">#S/#I<svg width="13" height="20" viewBox="0 0 13 20"><path d="M6.5 0.5 L12.5 8 H0.5Z M6.5 19.5 L12.5 12 H0.5Z" fill="#a9b3bc"/></svg></div>
<div class="hc" style="left:1171.5px;top:12.6px">Body Part<svg width="13" height="20" viewBox="0 0 13 20"><path d="M6.5 0.5 L12.5 8 H0.5Z M6.5 19.5 L12.5 12 H0.5Z" fill="#a9b3bc"/></svg></div>
<div class="hc" style="left:1299.5px;top:12.6px">Modality<svg width="13" height="20" viewBox="0 0 13 20"><path d="M6.5 0.5 L12.5 8 H0.5Z M6.5 19.5 L12.5 12 H0.5Z" fill="#a9b3bc"/></svg></div>
<div class="hc" style="left:1418.5px;top:12.6px">Study Date<svg width="13" height="20" viewBox="0 0 13 20"><path d="M6.5 0.5 L12.5 8 H0.5Z M6.5 19.5 L12.5 12 H0.5Z" fill="#a9b3bc"/></svg></div>
<div class="hc" style="left:1618px;top:12.6px">Referring Physician</div>
<div class="a" style="left:0;top:45.30px;width:1695px;height:34.14px;background:#2a4f66"></div>
<div class="a" style="left:19.19999999999999px;top:53.9px;width:17px;height:17px;border:1.8px solid #b3bcc3;border-radius:2px"></div>
<div class="bt" style="left:68px;top:53.1px">1</div>
<div class="bt" style="left:124.5px;top:53.1px">Lê Phúc Tuấn</div>
<div class="bt" style="left:370.5px;top:53.1px">Approved</div>
<svg class="a" style="left:486px;top:57.1px" width="20" height="11" viewBox="0 0 20 11"><path d="M9 1.6 H5.5 A3.9 3.9 0 0 0 5.5 9.4 H9 M11 1.6 H14.5 A3.9 3.9 0 0 1 14.5 9.4 H11" fill="none" stroke="#fff" stroke-width="2.2"/><path d="M6.2 5.5 H13.8" stroke="#fff" stroke-width="2"/></svg>
<div class="a" style="left:541.5px;top:56.9px;width:11px;height:11px;border-radius:50%;background:#3f6176"></div>
<div class="bt" style="left:598.5px;top:53.1px">KH9212924</div>
<div class="bt" style="left:754.5px;top:53.1px">449003</div>
<div class="bt" style="left:909.5px;top:53.1px">M</div>
<div class="bt" style="left:983.5px;top:53.1px">88</div>
<div class="bt" style="left:1057.5px;top:53.1px">1/1</div>
<div class="bt" style="left:1171.5px;top:53.1px">CHEST</div>
<div class="bt" style="left:1299.5px;top:53.1px">CR</div>
<div class="bt" style="left:1418.5px;top:53.1px">2020-05-01 06:05:46</div>
<div class="bt" style="left:1618px;top:53.1px">Võ Chí Trung</div>
<div class="a" style="left:0;top:79.44px;width:1695px;height:34.14px;background:#2a4f66"></div>
<div class="a" style="left:19.19999999999999px;top:88.1px;width:17px;height:17px;border:1.8px solid #b3bcc3;border-radius:2px"></div>
<div class="bt" style="left:68px;top:87.3px">2</div>
<div class="bt" style="left:124.5px;top:87.3px">Võ Huỳnh Khánh Minh</div>
<div class="bt" style="left:370.5px;top:87.3px">New</div>
<svg class="a" style="left:486px;top:88.3px" width="20" height="17" viewBox="0 0 20 17"><path d="M9 12.4 H5.3 A3.9 3.9 0 0 1 2.4 5.9 M11 4.6 H14.5 A3.9 3.9 0 0 1 17.4 11.2" fill="none" stroke="#fff" stroke-width="2.2"/><path d="M1.2 1 L16.6 16.2" stroke="#fff" stroke-width="2" stroke-linecap="round"/><path d="M12.6 8.3 L13.6 9.3" stroke="#fff" stroke-width="1.3"/></svg>
<div class="a" style="left:541.5px;top:91.1px;width:11px;height:11px;border-radius:50%;background:#3f6176"></div>
<div class="bt" style="left:598.5px;top:87.3px">BA9212320</div>
<div class="bt" style="left:754.5px;top:87.3px">651535</div>
<div class="bt" style="left:909.5px;top:87.3px">M</div>
<div class="bt" style="left:983.5px;top:87.3px">31</div>
<div class="bt" style="left:1057.5px;top:87.3px">2/152</div>
<div class="bt" style="left:1171.5px;top:87.3px">HEAD</div>
<div class="bt" style="left:1299.5px;top:87.3px">MR</div>
<div class="bt" style="left:1418.5px;top:87.3px">2020-05-02 07:10:15</div>
<div class="bt" style="left:1618px;top:87.3px">Trần Văn Anh</div>
<div class="a" style="left:0;top:113.58px;width:1695px;height:34.14px;background:#2a4f66"></div>
<div class="a" style="left:19.19999999999999px;top:122.2px;width:17px;height:17px;border:1.8px solid #b3bcc3;border-radius:2px"></div>
<div class="bt" style="left:68px;top:121.4px">3</div>
<div class="bt" style="left:124.5px;top:121.4px">Dương Hoài Nghĩa</div>
<div class="bt" style="left:370.5px;top:121.4px">Approved</div>
<svg class="a" style="left:486px;top:122.4px" width="20" height="17" viewBox="0 0 20 17"><path d="M9 12.4 H5.3 A3.9 3.9 0 0 1 2.4 5.9 M11 4.6 H14.5 A3.9 3.9 0 0 1 17.4 11.2" fill="none" stroke="#fff" stroke-width="2.2"/><path d="M1.2 1 L16.6 16.2" stroke="#fff" stroke-width="2" stroke-linecap="round"/><path d="M12.6 8.3 L13.6 9.3" stroke="#fff" stroke-width="1.3"/></svg>
<div class="a" style="left:541.5px;top:125.2px;width:11px;height:11px;border-radius:50%;background:#f04848"></div>
<div class="bt" style="left:598.5px;top:121.4px">SD9212969</div>
<div class="bt" style="left:754.5px;top:121.4px">267400</div>
<div class="bt" style="left:909.5px;top:121.4px">F</div>
<div class="bt" style="left:983.5px;top:121.4px">45</div>
<div class="bt" style="left:1057.5px;top:121.4px">2/152</div>
<div class="bt" style="left:1171.5px;top:121.4px">ABDOMEN</div>
<div class="bt" style="left:1299.5px;top:121.4px">CT</div>
<div class="bt" style="left:1418.5px;top:121.4px">2020-05-03 08:14:01</div>
<div class="bt" style="left:1618px;top:121.4px">Lê Công Nam</div>
<div class="a" style="left:0;top:147.72px;width:1695px;height:34.14px;background:#2a4f66"></div>
<div class="a" style="left:19.19999999999999px;top:156.3px;width:17px;height:17px;border:1.8px solid #b3bcc3;border-radius:2px"></div>
<div class="bt" style="left:68px;top:155.5px">4</div>
<div class="bt" style="left:124.5px;top:155.5px">Hứa Minh Tuyên</div>
<div class="bt" style="left:370.5px;top:155.5px">Approved</div>
<svg class="a" style="left:486px;top:159.5px" width="20" height="11" viewBox="0 0 20 11"><path d="M9 1.6 H5.5 A3.9 3.9 0 0 0 5.5 9.4 H9 M11 1.6 H14.5 A3.9 3.9 0 0 1 14.5 9.4 H11" fill="none" stroke="#fff" stroke-width="2.2"/><path d="M6.2 5.5 H13.8" stroke="#fff" stroke-width="2"/></svg>
<div class="a" style="left:541.5px;top:159.3px;width:11px;height:11px;border-radius:50%;background:#1fd286"></div>
<div class="bt" style="left:598.5px;top:155.5px">SD9212969</div>
<div class="bt" style="left:754.5px;top:155.5px">653518</div>
<div class="bt" style="left:909.5px;top:155.5px">M</div>
<div class="bt" style="left:983.5px;top:155.5px">76</div>
<div class="bt" style="left:1057.5px;top:155.5px">3/152</div>
<div class="bt" style="left:1171.5px;top:155.5px">CHEST</div>
<div class="bt" style="left:1299.5px;top:155.5px">CT</div>
<div class="bt" style="left:1418.5px;top:155.5px">2020-05-04 09:18:16</div>
<div class="bt" style="left:1618px;top:155.5px">Huỳnh Phúc</div>
<div class="a" style="left:0;top:181.86px;width:1695px;height:34.14px;background:#2a4f66"></div>
<div class="a" style="left:19.19999999999999px;top:190.5px;width:17px;height:17px;border:1.8px solid #b3bcc3;border-radius:2px"></div>
<div class="bt" style="left:68px;top:189.7px">5</div>
<div class="bt" style="left:124.5px;top:189.7px">Trần Quốc Việt</div>
<div class="bt" style="left:370.5px;top:189.7px">Approved</div>
<svg class="a" style="left:486px;top:193.7px" width="20" height="11" viewBox="0 0 20 11"><path d="M9 1.6 H5.5 A3.9 3.9 0 0 0 5.5 9.4 H9 M11 1.6 H14.5 A3.9 3.9 0 0 1 14.5 9.4 H11" fill="none" stroke="#fff" stroke-width="2.2"/><path d="M6.2 5.5 H13.8" stroke="#fff" stroke-width="2"/></svg>
<div class="a" style="left:541.5px;top:193.5px;width:11px;height:11px;border-radius:50%;background:#f04848"></div>
<div class="bt" style="left:598.5px;top:189.7px">BA9212320</div>
<div class="bt" style="left:754.5px;top:189.7px">267400</div>
<div class="bt" style="left:909.5px;top:189.7px">M</div>
<div class="bt" style="left:983.5px;top:189.7px">47</div>
<div class="bt" style="left:1057.5px;top:189.7px">3/1000</div>
<div class="bt" style="left:1171.5px;top:189.7px">ABDOMEN</div>
<div class="bt" style="left:1299.5px;top:189.7px">CT</div>
<div class="bt" style="left:1418.5px;top:189.7px">2020-05-05 10:21:13</div>
<div class="bt" style="left:1618px;top:189.7px">Trần Quốc</div>
<div class="a" style="left:0;top:216.00px;width:1695px;height:34.14px;background:#2a4f66"></div>
<div class="a" style="left:19.19999999999999px;top:224.6px;width:17px;height:17px;border:1.8px solid #b3bcc3;border-radius:2px"></div>
<div class="bt" style="left:68px;top:223.8px">6</div>
<div class="bt" style="left:124.5px;top:223.8px">Võ Huỳnh Khánh Minh</div>
<div class="bt" style="left:370.5px;top:223.8px">New</div>
<svg class="a" style="left:486px;top:227.8px" width="20" height="11" viewBox="0 0 20 11"><path d="M9 1.6 H5.5 A3.9 3.9 0 0 0 5.5 9.4 H9 M11 1.6 H14.5 A3.9 3.9 0 0 1 14.5 9.4 H11" fill="none" stroke="#fff" stroke-width="2.2"/><path d="M6.2 5.5 H13.8" stroke="#fff" stroke-width="2"/></svg>
<div class="a" style="left:541.5px;top:227.6px;width:11px;height:11px;border-radius:50%;background:#1fd286"></div>
<div class="bt" style="left:598.5px;top:223.8px">SD9212969</div>
<div class="bt" style="left:754.5px;top:223.8px">651535</div>
<div class="bt" style="left:909.5px;top:223.8px">F</div>
<div class="bt" style="left:983.5px;top:223.8px">86</div>
<div class="bt" style="left:1057.5px;top:223.8px">2/141</div>
<div class="bt" style="left:1171.5px;top:223.8px">CHEST</div>
<div class="bt" style="left:1299.5px;top:223.8px">CT</div>
<div class="bt" style="left:1418.5px;top:223.8px">2020-05-06 11:24:08</div>
<div class="bt" style="left:1618px;top:223.8px">Huỳnh Tấn</div>
<div class="a" style="left:0;top:250.14px;width:1695px;height:34.14px;background:#2a4f66"></div>
<div class="a" style="left:19.19999999999999px;top:258.8px;width:17px;height:17px;border:1.8px solid #b3bcc3;border-radius:2px"></div>
<div class="bt" style="left:68px;top:258.0px">7</div>
<div class="bt" style="left:124.5px;top:258.0px">Trần Văn Anh Tú</div>
<div class="bt" style="left:370.5px;top:258.0px">Approved</div>
<svg class="a" style="left:486px;top:262.0px" width="20" height="11" viewBox="0 0 20 11"><path d="M9 1.6 H5.5 A3.9 3.9 0 0 0 5.5 9.4 H9 M11 1.6 H14.5 A3.9 3.9 0 0 1 14.5 9.4 H11" fill="none" stroke="#fff" stroke-width="2.2"/><path d="M6.2 5.5 H13.8" stroke="#fff" stroke-width="2"/></svg>
<div class="a" style="left:541.5px;top:261.8px;width:11px;height:11px;border-radius:50%;background:#1fd286"></div>
<div class="bt" style="left:598.5px;top:258.0px">012921097</div>
<div class="bt" style="left:754.5px;top:258.0px">651535</div>
<div class="bt" style="left:909.5px;top:258.0px">M</div>
<div class="bt" style="left:983.5px;top:258.0px">35</div>
<div class="bt" style="left:1057.5px;top:258.0px">1/1</div>
<div class="bt" style="left:1171.5px;top:258.0px">ABDOMEN</div>
<div class="bt" style="left:1299.5px;top:258.0px">CT</div>
<div class="bt" style="left:1418.5px;top:258.0px">2020-05-01 06:05:46</div>
<div class="bt" style="left:1618px;top:258.0px">Dương Hoài</div>
<div class="a" style="left:0;top:284.28px;width:1695px;height:34.14px;background:#2a4f66"></div>
<div class="a" style="left:19.19999999999999px;top:292.9px;width:17px;height:17px;border:1.8px solid #b3bcc3;border-radius:2px"></div>
<div class="bt" style="left:68px;top:292.1px">8</div>
<div class="bt" style="left:124.5px;top:292.1px">Nguyễn Dương Tuân</div>
<div class="bt" style="left:370.5px;top:292.1px">Approved</div>
<svg class="a" style="left:486px;top:296.1px" width="20" height="11" viewBox="0 0 20 11"><path d="M9 1.6 H5.5 A3.9 3.9 0 0 0 5.5 9.4 H9 M11 1.6 H14.5 A3.9 3.9 0 0 1 14.5 9.4 H11" fill="none" stroke="#fff" stroke-width="2.2"/><path d="M6.2 5.5 H13.8" stroke="#fff" stroke-width="2"/></svg>
<div class="a" style="left:541.5px;top:295.9px;width:11px;height:11px;border-radius:50%;background:#f04848"></div>
<div class="bt" style="left:598.5px;top:292.1px">012921097</div>
<div class="bt" style="left:754.5px;top:292.1px">558612</div>
<div class="bt" style="left:909.5px;top:292.1px">M</div>
<div class="bt" style="left:983.5px;top:292.1px">91</div>
<div class="bt" style="left:1057.5px;top:292.1px">1/1</div>
<div class="bt" style="left:1171.5px;top:292.1px">CHEST</div>
<div class="bt" style="left:1299.5px;top:292.1px">CR</div>
<div class="bt" style="left:1418.5px;top:292.1px">2020-05-02 07:10:15</div>
<div class="bt" style="left:1618px;top:292.1px">Hà Lê Chí</div>
<div class="a" style="left:0;top:318.42px;width:1695px;height:34.14px;background:#2a4f66"></div>
<div class="a" style="left:19.19999999999999px;top:327.0px;width:17px;height:17px;border:1.8px solid #b3bcc3;border-radius:2px"></div>
<div class="bt" style="left:68px;top:326.2px">9</div>
<div class="bt" style="left:124.5px;top:326.2px">Huỳnh Tấn Đạt</div>
<div class="bt" style="left:370.5px;top:326.2px">Approved</div>
<svg class="a" style="left:486px;top:330.2px" width="20" height="11" viewBox="0 0 20 11"><path d="M9 1.6 H5.5 A3.9 3.9 0 0 0 5.5 9.4 H9 M11 1.6 H14.5 A3.9 3.9 0 0 1 14.5 9.4 H11" fill="none" stroke="#fff" stroke-width="2.2"/><path d="M6.2 5.5 H13.8" stroke="#fff" stroke-width="2"/></svg>
<div class="a" style="left:541.5px;top:330.0px;width:11px;height:11px;border-radius:50%;background:#1fd286"></div>
<div class="bt" style="left:598.5px;top:326.2px">SD9212969</div>
<div class="bt" style="left:754.5px;top:326.2px">449003</div>
<div class="bt" style="left:909.5px;top:326.2px">F</div>
<div class="bt" style="left:983.5px;top:326.2px">69</div>
<div class="bt" style="left:1057.5px;top:326.2px">3/152</div>
<div class="bt" style="left:1171.5px;top:326.2px">HEAD</div>
<div class="bt" style="left:1299.5px;top:326.2px">MR</div>
<div class="bt" style="left:1418.5px;top:326.2px">2020-05-03 08:14:01</div>
<div class="bt" style="left:1618px;top:326.2px">Nguyễn Dương</div>
<div class="a" style="left:0;top:352.56px;width:1695px;height:34.14px;background:#2a4f66"></div>
<div class="a" style="left:19.19999999999999px;top:361.2px;width:17px;height:17px;border:1.8px solid #b3bcc3;border-radius:2px"></div>
<div class="bt" style="left:68px;top:360.4px">10</div>
<div class="bt" style="left:124.5px;top:360.4px">Hứa Minh Tuyên</div>
<div class="bt" style="left:370.5px;top:360.4px">Approved</div>
<svg class="a" style="left:486px;top:361.4px" width="20" height="17" viewBox="0 0 20 17"><path d="M9 12.4 H5.3 A3.9 3.9 0 0 1 2.4 5.9 M11 4.6 H14.5 A3.9 3.9 0 0 1 17.4 11.2" fill="none" stroke="#fff" stroke-width="2.2"/><path d="M1.2 1 L16.6 16.2" stroke="#fff" stroke-width="2" stroke-linecap="round"/><path d="M12.6 8.3 L13.6 9.3" stroke="#fff" stroke-width="1.3"/></svg>
<div class="a" style="left:541.5px;top:364.2px;width:11px;height:11px;border-radius:50%;background:#1fd286"></div>
<div class="bt" style="left:598.5px;top:360.4px">012921097</div>
<div class="bt" style="left:754.5px;top:360.4px">487441</div>
<div class="bt" style="left:909.5px;top:360.4px">M</div>
<div class="bt" style="left:983.5px;top:360.4px">54</div>
<div class="bt" style="left:1057.5px;top:360.4px">3/152</div>
<div class="bt" style="left:1171.5px;top:360.4px">CHEST</div>
<div class="bt" style="left:1299.5px;top:360.4px">CR</div>
<div class="bt" style="left:1418.5px;top:360.4px">2020-05-04 09:18:16</div>
<div class="bt" style="left:1618px;top:360.4px">Đỗ Hùng Thịnh</div>
<div class="a" style="left:0;top:386.70px;width:1695px;height:34.14px;background:#417c9c"></div>
<div class="a" style="left:19.19999999999999px;top:395.3px;width:17px;height:17px;background:#38bfd7;border-radius:2px"></div>
<svg class="a" style="left:19.19999999999999px;top:395.3px" width="17" height="17" viewBox="0 0 17 17"><path d="M2.9 8.4 L7 12.4 L14.4 4.4" fill="none" stroke="#417c9c" stroke-width="1.9"/></svg>
<div class="bt" style="left:68px;top:394.5px">11</div>
<div class="bt" style="left:124.5px;top:394.5px">Nguyễn Dương Tuân</div>
<div class="bt" style="left:370.5px;top:394.5px">Reading</div>
<svg class="a" style="left:486px;top:398.5px" width="20" height="11" viewBox="0 0 20 11"><path d="M9 1.6 H5.5 A3.9 3.9 0 0 0 5.5 9.4 H9 M11 1.6 H14.5 A3.9 3.9 0 0 1 14.5 9.4 H11" fill="none" stroke="#fff" stroke-width="2.2"/><path d="M6.2 5.5 H13.8" stroke="#fff" stroke-width="2"/></svg>
<div class="a" style="left:541.5px;top:398.3px;width:11px;height:11px;border-radius:50%;background:#1fd286"></div>
<div class="bt" style="left:598.5px;top:394.5px">SD9212969</div>
<div class="bt" style="left:754.5px;top:394.5px">487441</div>
<div class="bt" style="left:909.5px;top:394.5px">M</div>
<div class="bt" style="left:983.5px;top:394.5px">36</div>
<div class="bt" style="left:1057.5px;top:394.5px">3/152</div>
<div class="bt" style="left:1171.5px;top:394.5px">HEAD</div>
<div class="bt" style="left:1299.5px;top:394.5px">MR</div>
<div class="bt" style="left:1418.5px;top:394.5px">2020-05-05 10:21:13</div>
<div class="bt" style="left:1618px;top:394.5px">Lê Phúc Tuấn</div>
<div class="a" style="left:0;top:420.84px;width:1695px;height:34.14px;background:#2a4f66"></div>
<div class="a" style="left:19.19999999999999px;top:429.5px;width:17px;height:17px;border:1.8px solid #b3bcc3;border-radius:2px"></div>
<div class="bt" style="left:68px;top:428.7px">12</div>
<div class="bt" style="left:124.5px;top:428.7px">Võ Chí Trung</div>
<div class="bt" style="left:370.5px;top:428.7px">New</div>
<svg class="a" style="left:486px;top:432.7px" width="20" height="11" viewBox="0 0 20 11"><path d="M9 1.6 H5.5 A3.9 3.9 0 0 0 5.5 9.4 H9 M11 1.6 H14.5 A3.9 3.9 0 0 1 14.5 9.4 H11" fill="none" stroke="#fff" stroke-width="2.2"/><path d="M6.2 5.5 H13.8" stroke="#fff" stroke-width="2"/></svg>
<div class="a" style="left:541.5px;top:432.5px;width:11px;height:11px;border-radius:50%;background:#3f6176"></div>
<div class="bt" style="left:598.5px;top:428.7px">SD9212969</div>
<div class="bt" style="left:754.5px;top:428.7px">651535</div>
<div class="bt" style="left:909.5px;top:428.7px">M</div>
<div class="bt" style="left:983.5px;top:428.7px">22</div>
<div class="bt" style="left:1057.5px;top:428.7px">2/152</div>
<div class="bt" style="left:1171.5px;top:428.7px">CHEST</div>
<div class="bt" style="left:1299.5px;top:428.7px">CR</div>
<div class="bt" style="left:1418.5px;top:428.7px">2020-05-06 11:24:08</div>
<div class="bt" style="left:1618px;top:428.7px">Trần Quốc</div>
<div class="a" style="left:0;top:454.98px;width:1695px;height:34.14px;background:#2a4f66"></div>
<div class="a" style="left:19.19999999999999px;top:463.6px;width:17px;height:17px;border:1.8px solid #b3bcc3;border-radius:2px"></div>
<div class="bt" style="left:68px;top:462.8px">13</div>
<div class="bt" style="left:124.5px;top:462.8px">Đỗ Hùng Thịnh</div>
<div class="bt" style="left:370.5px;top:462.8px">Approved</div>
<svg class="a" style="left:486px;top:463.8px" width="20" height="17" viewBox="0 0 20 17"><path d="M9 12.4 H5.3 A3.9 3.9 0 0 1 2.4 5.9 M11 4.6 H14.5 A3.9 3.9 0 0 1 17.4 11.2" fill="none" stroke="#fff" stroke-width="2.2"/><path d="M1.2 1 L16.6 16.2" stroke="#fff" stroke-width="2" stroke-linecap="round"/><path d="M12.6 8.3 L13.6 9.3" stroke="#fff" stroke-width="1.3"/></svg>
<div class="a" style="left:541.5px;top:466.6px;width:11px;height:11px;border-radius:50%;background:#1fd286"></div>
<div class="bt" style="left:598.5px;top:462.8px">012921097</div>
<div class="bt" style="left:754.5px;top:462.8px">487441</div>
<div class="bt" style="left:909.5px;top:462.8px">M</div>
<div class="bt" style="left:983.5px;top:462.8px">54</div>
<div class="bt" style="left:1057.5px;top:462.8px">3/152</div>
<div class="bt" style="left:1171.5px;top:462.8px">HEAD</div>
<div class="bt" style="left:1299.5px;top:462.8px">MR</div>
<div class="bt" style="left:1418.5px;top:462.8px">2020-05-04 09:18:16</div>
<div class="bt" style="left:1618px;top:462.8px">Đỗ Hùng Thịnh</div>
<div class="a" style="left:0;top:489.12px;width:1695px;height:34.14px;background:#2a4f66"></div>
<div class="a" style="left:19.19999999999999px;top:497.7px;width:17px;height:17px;border:1.8px solid #b3bcc3;border-radius:2px"></div>
<div class="bt" style="left:68px;top:496.9px">14</div>
<div class="bt" style="left:124.5px;top:496.9px">Hà Lê Chí Bảo</div>
<div class="bt" style="left:370.5px;top:496.9px">Reading</div>
<svg class="a" style="left:486px;top:497.9px" width="20" height="17" viewBox="0 0 20 17"><path d="M9 12.4 H5.3 A3.9 3.9 0 0 1 2.4 5.9 M11 4.6 H14.5 A3.9 3.9 0 0 1 17.4 11.2" fill="none" stroke="#fff" stroke-width="2.2"/><path d="M1.2 1 L16.6 16.2" stroke="#fff" stroke-width="2" stroke-linecap="round"/><path d="M12.6 8.3 L13.6 9.3" stroke="#fff" stroke-width="1.3"/></svg>
<div class="a" style="left:541.5px;top:500.7px;width:11px;height:11px;border-radius:50%;background:#1fd286"></div>
<div class="bt" style="left:598.5px;top:496.9px">SD9212969</div>
<div class="bt" style="left:754.5px;top:496.9px">487441</div>
<div class="bt" style="left:909.5px;top:496.9px">M</div>
<div class="bt" style="left:983.5px;top:496.9px">36</div>
<div class="bt" style="left:1057.5px;top:496.9px">2/152</div>
<div class="bt" style="left:1171.5px;top:496.9px">CHEST</div>
<div class="bt" style="left:1299.5px;top:496.9px">CR</div>
<div class="bt" style="left:1418.5px;top:496.9px">2020-05-05 10:21:13</div>
<div class="bt" style="left:1618px;top:496.9px">Lê Phúc Tuấn</div>
<div class="a" style="left:0;top:523.26px;width:1695px;height:34.14px;background:#2a4f66"></div>
<div class="a" style="left:19.19999999999999px;top:531.9px;width:17px;height:17px;border:1.8px solid #b3bcc3;border-radius:2px"></div>
<div class="bt" style="left:68px;top:531.1px">15</div>
<div class="bt" style="left:124.5px;top:531.1px">Hứa Minh Tuyên</div>
<div class="bt" style="left:370.5px;top:531.1px">New</div>
<svg class="a" style="left:486px;top:532.1px" width="20" height="17" viewBox="0 0 20 17"><path d="M9 12.4 H5.3 A3.9 3.9 0 0 1 2.4 5.9 M11 4.6 H14.5 A3.9 3.9 0 0 1 17.4 11.2" fill="none" stroke="#fff" stroke-width="2.2"/><path d="M1.2 1 L16.6 16.2" stroke="#fff" stroke-width="2" stroke-linecap="round"/><path d="M12.6 8.3 L13.6 9.3" stroke="#fff" stroke-width="1.3"/></svg>
<div class="a" style="left:541.5px;top:534.9px;width:11px;height:11px;border-radius:50%;background:#1fd286"></div>
<div class="bt" style="left:598.5px;top:531.1px">SD9212969</div>
<div class="bt" style="left:754.5px;top:531.1px">651535</div>
<div class="bt" style="left:909.5px;top:531.1px">M</div>
<div class="bt" style="left:983.5px;top:531.1px">22</div>
<div class="bt" style="left:1057.5px;top:531.1px">2/152</div>
<div class="bt" style="left:1171.5px;top:531.1px">CHEST</div>
<div class="bt" style="left:1299.5px;top:531.1px">CR</div>
<div class="bt" style="left:1418.5px;top:531.1px">2020-05-06 11:24:08</div>
<div class="bt" style="left:1618px;top:531.1px">Trần Quốc</div>
<svg class="a" style="left:0;top:0" width="1695" height="535" viewBox="0 0 1695 535"><rect x="54.88" y="0" width="1.45" height="45.3" fill="#56636d"/><rect x="111.88" y="0" width="1.45" height="45.3" fill="#56636d"/><rect x="357.98" y="0" width="1.45" height="45.3" fill="#56636d"/><rect x="471.88" y="0" width="1.45" height="45.3" fill="#56636d"/><rect x="528.58" y="0" width="1.45" height="45.3" fill="#56636d"/><rect x="585.28" y="0" width="1.45" height="45.3" fill="#56636d"/><rect x="741.78" y="0" width="1.45" height="45.3" fill="#56636d"/><rect x="896.78" y="0" width="1.45" height="45.3" fill="#56636d"/><rect x="970.78" y="0" width="1.45" height="45.3" fill="#56636d"/><rect x="1044.78" y="0" width="1.45" height="45.3" fill="#56636d"/><rect x="1158.78" y="0" width="1.45" height="45.3" fill="#56636d"/><rect x="1286.78" y="0" width="1.45" height="45.3" fill="#56636d"/><rect x="1405.78" y="0" width="1.45" height="45.3" fill="#56636d"/><rect x="1605.03" y="0" width="1.45" height="45.3" fill="#56636d"/><rect x="0" y="77.99" width="1695" height="1.45" fill="#5a6874"/><rect x="0" y="112.13" width="1695" height="1.45" fill="#5a6874"/><rect x="0" y="146.27" width="1695" height="1.45" fill="#5a6874"/><rect x="0" y="180.41" width="1695" height="1.45" fill="#5a6874"/><rect x="0" y="214.55" width="1695" height="1.45" fill="#5a6874"/><rect x="0" y="248.69" width="1695" height="1.45" fill="#5a6874"/><rect x="0" y="282.83" width="1695" height="1.45" fill="#5a6874"/><rect x="0" y="316.97" width="1695" height="1.45" fill="#5a6874"/><rect x="0" y="351.11" width="1695" height="1.45" fill="#5a6874"/><rect x="0" y="385.25" width="1695" height="1.45" fill="#5a6874"/><rect x="0" y="419.39" width="1695" height="1.45" fill="#5a6874"/><rect x="0" y="453.53" width="1695" height="1.45" fill="#5a6874"/><rect x="0" y="487.67" width="1695" height="1.45" fill="#5a6874"/><rect x="0" y="521.81" width="1695" height="1.45" fill="#5a6874"/><rect x="0" y="555.95" width="1695" height="1.45" fill="#5a6874"/></svg>
<div class="a" style="left:1682px;top:4.400000000000006px;width:9px;height:148.99999999999997px;border-radius:5px;background:rgba(160,178,190,0.6)"></div>
<div class="a" style="left:3px;top:523px;width:855px;height:9px;border-radius:5px;background:rgba(160,178,190,0.75)"></div>
</div>
<div class="t" style="left:319px;top:798px;font-size:17.2px;color:#c8cdd1">1 item(s) selected</div>
<div class="a" style="left:1106.5px;top:791px;width:45.5px;height:34px;border:2px solid #4f5c69;border-radius:3px"></div>
<svg class="a" style="left:1123px;top:801px" width="12" height="14" viewBox="0 0 12 14"><path d="M8.5 1.5 L3 7 L8.5 12.5" fill="none" stroke="#fff" stroke-width="1.8"/></svg>
<div class="a" style="left:1163.5px;top:791px;width:45.5px;height:34px;border:2px solid #4f5c69;border-radius:3px"></div>
<div class="t" style="left:1163.5px;top:797px;width:45.5px;text-align:center;font-size:16.5px;color:#fff">1</div>
<svg class="a" style="left:1229px;top:805px" width="30" height="6" viewBox="0 0 30 6"><circle cx="4.7" cy="3" r="2.5" fill="#fff"/><circle cx="14.8" cy="3" r="2.5" fill="#fff"/><circle cx="24.6" cy="3" r="2.5" fill="#fff"/></svg>
<div class="a" style="left:1277px;top:791px;width:45.5px;height:34px;border:2px solid #4f5c69;border-radius:3px"></div>
<div class="t" style="left:1277px;top:797px;width:45.5px;text-align:center;font-size:16.5px;color:#fff">4</div>
<div class="a" style="left:1334px;top:791px;width:45.5px;height:34px;border:2px solid #4f5c69;border-radius:3px"></div>
<div class="t" style="left:1334px;top:797px;width:45.5px;text-align:center;font-size:16.5px;color:#fff">5</div>
<div class="a" style="left:1391px;top:791px;width:45.5px;height:34px;border:2px solid #33b4cc;border-radius:3px"></div>
<div class="t" style="left:1391px;top:797px;width:45.5px;text-align:center;font-size:16.5px;color:#38bfd7">6</div>
<div class="a" style="left:1448px;top:791px;width:45.5px;height:34px;border:2px solid #4f5c69;border-radius:3px"></div>
<div class="t" style="left:1448px;top:797px;width:45.5px;text-align:center;font-size:16.5px;color:#fff">7</div>
<div class="a" style="left:1505px;top:791px;width:45.5px;height:34px;border:2px solid #4f5c69;border-radius:3px"></div>
<div class="t" style="left:1505px;top:797px;width:45.5px;text-align:center;font-size:16.5px;color:#fff">8</div>
<svg class="a" style="left:1570.5px;top:805px" width="30" height="6" viewBox="0 0 30 6"><circle cx="4.7" cy="3" r="2.5" fill="#fff"/><circle cx="14.7" cy="3" r="2.5" fill="#fff"/><circle cx="24.8" cy="3" r="2.5" fill="#fff"/></svg>
<div class="a" style="left:1619px;top:791px;width:45.5px;height:34px;border:2px solid #4f5c69;border-radius:3px"></div>
<div class="t" style="left:1619px;top:797px;width:45.5px;text-align:center;font-size:16.5px;color:#fff">50</div>
<div class="a" style="left:1676px;top:791px;width:45.5px;height:34px;border:2px solid #4f5c69;border-radius:3px"></div>
<svg class="a" style="left:1692px;top:801px" width="12" height="14" viewBox="0 0 12 14"><path d="M3.5 1.5 L9 7 L3.5 12.5" fill="none" stroke="#fff" stroke-width="1.8"/></svg>
<div class="a" style="left:1744px;top:791px;width:134.5px;height:34px;border:2px solid #4f5c69;border-radius:3px"></div>
<div class="t" style="left:1760px;top:797px;font-size:16.5px;color:#fff">10 / page</div>
<svg class="a" style="left:1844px;top:803px" width="13" height="9" viewBox="0 0 13 9"><path d="M1.5 1.5 L6.5 6.5 L11.5 1.5" fill="none" stroke="#fff" stroke-width="2"/></svg>
<div class="t" style="left:1890px;top:797px;font-size:16.5px;color:#fff">Go to</div>
<div class="a" style="left:1943px;top:791px;width:71px;height:34px;border:2px solid #4f5c69;border-radius:3px"></div>
<div class="a" style="left:296px;top:860.5px;width:1741px;height:4px;background:#2c343c"></div>
<div class="a" style="left:296px;top:888px;width:1741px;height:312px;background:#202b33;border-radius:3px"></div>
<div class="a" style="left:296px;top:943px;width:1741px;height:1.5px;background:#2b3942"></div>
<div class="t" style="left:318.5px;top:904.5px;font-size:23px;line-height:24px;font-weight:400;text-shadow:0.45px 0 0 #fff;color:#fff">Related Studies</div>
<svg class="a" style="left:1923px;top:911px" width="14" height="10" viewBox="0 0 14 10"><path d="M1.5 2 L7 7.5 L12.5 2" fill="none" stroke="#38bfd7" stroke-width="2"/></svg>
<div class="t" style="left:1947px;top:905px;font-size:16.5px;color:#38bfd7">Collapse</div>
<div class="a" style="left:319px;top:961.4px;width:1695px;height:221.6px;overflow:hidden;border-radius:3px 3px 0 0;background:#2a4f66">
<div class="a" style="left:0;top:0;width:1695px;height:45.3px;background:#2c4453"></div>
<div class="a" style="left:19.19999999999999px;top:14.1px;width:17px;height:17px;border:2px solid #f2f4f6;border-radius:2px"></div>
<div class="hc" style="left:68px;top:12.6px">#</div>
<div class="hc" style="left:124.5px;top:12.6px">Name<svg width="13" height="20" viewBox="0 0 13 20"><path d="M6.5 0.5 L12.5 8 H0.5Z M6.5 19.5 L12.5 12 H0.5Z" fill="#a9b3bc"/></svg></div>
<div class="hc" style="left:370.5px;top:12.6px">Status<svg width="13" height="20" viewBox="0 0 13 20"><path d="M6.5 0.5 L12.5 8 H0.5Z M6.5 19.5 L12.5 12 H0.5Z" fill="#a9b3bc"/></svg></div>
<div class="hc" style="left:484px;top:12.6px">HIS</div>
<div class="hc" style="left:540.5px;top:12.6px">CAD</div>
<div class="hc" style="left:598.5px;top:12.6px">PID<svg width="13" height="20" viewBox="0 0 13 20"><path d="M6.5 0.5 L12.5 8 H0.5Z M6.5 19.5 L12.5 12 H0.5Z" fill="#a9b3bc"/></svg></div>
<div class="hc" style="left:754.5px;top:12.6px">Accession #<svg width="13" height="20" viewBox="0 0 13 20"><path d="M6.5 0.5 L12.5 8 H0.5Z M6.5 19.5 L12.5 12 H0.5Z" fill="#a9b3bc"/></svg></div>
<div class="hc" style="left:909.5px;top:12.6px">Sex<svg width="13" height="20" viewBox="0 0 13 20"><path d="M6.5 0.5 L12.5 8 H0.5Z M6.5 19.5 L12.5 12 H0.5Z" fill="#a9b3bc"/></svg></div>
<div class="hc" style="left:983.5px;top:12.6px">Age<svg width="13" height="20" viewBox="0 0 13 20"><path d="M6.5 0.5 L12.5 8 H0.5Z M6.5 19.5 L12.5 12 H0.5Z" fill="#a9b3bc"/></svg></div>
<div class="hc" style="left:1057.5px;top:12.6px">#S/#I<svg width="13" height="20" viewBox="0 0 13 20"><path d="M6.5 0.5 L12.5 8 H0.5Z M6.5 19.5 L12.5 12 H0.5Z" fill="#a9b3bc"/></svg></div>
<div class="hc" style="left:1171.5px;top:12.6px">Body Part<svg width="13" height="20" viewBox="0 0 13 20"><path d="M6.5 0.5 L12.5 8 H0.5Z M6.5 19.5 L12.5 12 H0.5Z" fill="#a9b3bc"/></svg></div>
<div class="hc" style="left:1299.5px;top:12.6px">Modality<svg width="13" height="20" viewBox="0 0 13 20"><path d="M6.5 0.5 L12.5 8 H0.5Z M6.5 19.5 L12.5 12 H0.5Z" fill="#a9b3bc"/></svg></div>
<div class="hc" style="left:1418.5px;top:12.6px">Study Date<svg width="13" height="20" viewBox="0 0 13 20"><path d="M6.5 0.5 L12.5 8 H0.5Z M6.5 19.5 L12.5 12 H0.5Z" fill="#a9b3bc"/></svg></div>
<div class="hc" style="left:1618px;top:12.6px">Referring Physician</div>
<div class="a" style="left:0;top:45.30px;width:1695px;height:34.14px;background:#2a4f66"></div>
<div class="a" style="left:19.19999999999999px;top:53.9px;width:17px;height:17px;border:1.8px solid #b3bcc3;border-radius:2px"></div>
<div class="bt" style="left:68px;top:53.1px">1</div>
<div class="bt" style="left:124.5px;top:53.1px">Nguyễn Dương Tuân</div>
<div class="bt" style="left:370.5px;top:53.1px">Approved</div>
<svg class="a" style="left:486px;top:57.1px" width="20" height="11" viewBox="0 0 20 11"><path d="M9 1.6 H5.5 A3.9 3.9 0 0 0 5.5 9.4 H9 M11 1.6 H14.5 A3.9 3.9 0 0 1 14.5 9.4 H11" fill="none" stroke="#fff" stroke-width="2.2"/><path d="M6.2 5.5 H13.8" stroke="#fff" stroke-width="2"/></svg>
<div class="a" style="left:541.5px;top:56.9px;width:11px;height:11px;border-radius:50%;background:#1fd286"></div>
<div class="bt" style="left:598.5px;top:53.1px">SD9212969</div>
<div class="bt" style="left:754.5px;top:53.1px">449003</div>
<div class="bt" style="left:909.5px;top:53.1px">M</div>
<div class="bt" style="left:983.5px;top:53.1px">69</div>
<div class="bt" style="left:1057.5px;top:53.1px">3/152</div>
<div class="bt" style="left:1171.5px;top:53.1px">HEAD</div>
<div class="bt" style="left:1299.5px;top:53.1px">MR</div>
<div class="bt" style="left:1418.5px;top:53.1px">2020-05-03 08:14:01</div>
<div class="bt" style="left:1618px;top:53.1px">Nguyễn Dương</div>
<div class="a" style="left:0;top:79.44px;width:1695px;height:34.14px;background:#2a4f66"></div>
<div class="a" style="left:19.19999999999999px;top:88.1px;width:17px;height:17px;border:1.8px solid #b3bcc3;border-radius:2px"></div>
<div class="bt" style="left:68px;top:87.3px">2</div>
<div class="bt" style="left:124.5px;top:87.3px">Nguyễn Dương Tuân</div>
<div class="bt" style="left:370.5px;top:87.3px">Approved</div>
<svg class="a" style="left:486px;top:88.3px" width="20" height="17" viewBox="0 0 20 17"><path d="M9 12.4 H5.3 A3.9 3.9 0 0 1 2.4 5.9 M11 4.6 H14.5 A3.9 3.9 0 0 1 17.4 11.2" fill="none" stroke="#fff" stroke-width="2.2"/><path d="M1.2 1 L16.6 16.2" stroke="#fff" stroke-width="2" stroke-linecap="round"/><path d="M12.6 8.3 L13.6 9.3" stroke="#fff" stroke-width="1.3"/></svg>
<div class="a" style="left:541.5px;top:91.1px;width:11px;height:11px;border-radius:50%;background:#1fd286"></div>
<div class="bt" style="left:598.5px;top:87.3px">SD9212969</div>
<div class="bt" style="left:754.5px;top:87.3px">487441</div>
<div class="bt" style="left:909.5px;top:87.3px">M</div>
<div class="bt" style="left:983.5px;top:87.3px">54</div>
<div class="bt" style="left:1057.5px;top:87.3px">3/152</div>
<div class="bt" style="left:1171.5px;top:87.3px">CHEST</div>
<div class="bt" style="left:1299.5px;top:87.3px">CR</div>
<div class="bt" style="left:1418.5px;top:87.3px">2020-05-04 09:18:16</div>
<div class="bt" style="left:1618px;top:87.3px">Đỗ Hùng Thịnh</div>
<div class="a" style="left:0;top:113.58px;width:1695px;height:34.14px;background:#2a4f66"></div>
<div class="a" style="left:19.19999999999999px;top:122.2px;width:17px;height:17px;border:1.8px solid #b3bcc3;border-radius:2px"></div>
<div class="bt" style="left:68px;top:121.4px">3</div>
<div class="bt" style="left:124.5px;top:121.4px">Nguyễn Dương Tuân</div>
<div class="bt" style="left:370.5px;top:121.4px">Reading</div>
<svg class="a" style="left:486px;top:122.4px" width="20" height="17" viewBox="0 0 20 17"><path d="M9 12.4 H5.3 A3.9 3.9 0 0 1 2.4 5.9 M11 4.6 H14.5 A3.9 3.9 0 0 1 17.4 11.2" fill="none" stroke="#fff" stroke-width="2.2"/><path d="M1.2 1 L16.6 16.2" stroke="#fff" stroke-width="2" stroke-linecap="round"/><path d="M12.6 8.3 L13.6 9.3" stroke="#fff" stroke-width="1.3"/></svg>
<div class="a" style="left:541.5px;top:125.2px;width:11px;height:11px;border-radius:50%;background:#1fd286"></div>
<div class="bt" style="left:598.5px;top:121.4px">SD9212969</div>
<div class="bt" style="left:754.5px;top:121.4px">487441</div>
<div class="bt" style="left:909.5px;top:121.4px">M</div>
<div class="bt" style="left:983.5px;top:121.4px">36</div>
<div class="bt" style="left:1057.5px;top:121.4px">3/152</div>
<div class="bt" style="left:1171.5px;top:121.4px">HEAD</div>
<div class="bt" style="left:1299.5px;top:121.4px">MR</div>
<div class="bt" style="left:1418.5px;top:121.4px">2020-05-05 10:21:13</div>
<div class="bt" style="left:1618px;top:121.4px">Lê Phúc Tuấn</div>
<div class="a" style="left:0;top:147.72px;width:1695px;height:34.14px;background:#2a4f66"></div>
<div class="a" style="left:19.19999999999999px;top:156.3px;width:17px;height:17px;border:1.8px solid #b3bcc3;border-radius:2px"></div>
<div class="bt" style="left:68px;top:155.5px">4</div>
<div class="bt" style="left:124.5px;top:155.5px">Nguyễn Dương Tuân</div>
<div class="bt" style="left:370.5px;top:155.5px">New</div>
<svg class="a" style="left:486px;top:159.5px" width="20" height="11" viewBox="0 0 20 11"><path d="M9 1.6 H5.5 A3.9 3.9 0 0 0 5.5 9.4 H9 M11 1.6 H14.5 A3.9 3.9 0 0 1 14.5 9.4 H11" fill="none" stroke="#fff" stroke-width="2.2"/><path d="M6.2 5.5 H13.8" stroke="#fff" stroke-width="2"/></svg>
<div class="a" style="left:541.5px;top:159.3px;width:11px;height:11px;border-radius:50%;background:#3f6176"></div>
<div class="bt" style="left:598.5px;top:155.5px">SD9212969</div>
<div class="bt" style="left:754.5px;top:155.5px">651535</div>
<div class="bt" style="left:909.5px;top:155.5px">M</div>
<div class="bt" style="left:983.5px;top:155.5px">22</div>
<div class="bt" style="left:1057.5px;top:155.5px">2/152</div>
<div class="bt" style="left:1171.5px;top:155.5px">CHEST</div>
<div class="bt" style="left:1299.5px;top:155.5px">CR</div>
<div class="bt" style="left:1418.5px;top:155.5px">2020-05-06 11:24:08</div>
<div class="bt" style="left:1618px;top:155.5px">Trần Quốc</div>
<div class="a" style="left:0;top:181.86px;width:1695px;height:34.14px;background:#2a4f66"></div>
<div class="a" style="left:19.19999999999999px;top:190.5px;width:17px;height:17px;border:1.8px solid #b3bcc3;border-radius:2px"></div>
<div class="bt" style="left:68px;top:189.7px">5</div>
<div class="bt" style="left:124.5px;top:189.7px">Nguyễn Dương Tuân</div>
<div class="bt" style="left:370.5px;top:189.7px">Approved</div>
<svg class="a" style="left:486px;top:193.7px" width="20" height="11" viewBox="0 0 20 11"><path d="M9 1.6 H5.5 A3.9 3.9 0 0 0 5.5 9.4 H9 M11 1.6 H14.5 A3.9 3.9 0 0 1 14.5 9.4 H11" fill="none" stroke="#fff" stroke-width="2.2"/><path d="M6.2 5.5 H13.8" stroke="#fff" stroke-width="2"/></svg>
<div class="a" style="left:541.5px;top:193.5px;width:11px;height:11px;border-radius:50%;background:#1fd286"></div>
<div class="bt" style="left:598.5px;top:189.7px">SD9212969</div>
<div class="bt" style="left:754.5px;top:189.7px">487441</div>
<div class="bt" style="left:909.5px;top:189.7px">M</div>
<div class="bt" style="left:983.5px;top:189.7px">54</div>
<div class="bt" style="left:1057.5px;top:189.7px">3/152</div>
<div class="bt" style="left:1171.5px;top:189.7px">HEAD</div>
<div class="bt" style="left:1299.5px;top:189.7px">MR</div>
<div class="bt" style="left:1418.5px;top:189.7px">2020-05-04 09:18:16</div>
<div class="bt" style="left:1618px;top:189.7px">Đỗ Hùng Thịnh</div>
<svg class="a" style="left:0;top:0" width="1695" height="221.6" viewBox="0 0 1695 221.6"><rect x="54.88" y="0" width="1.45" height="45.3" fill="#56636d"/><rect x="111.88" y="0" width="1.45" height="45.3" fill="#56636d"/><rect x="357.98" y="0" width="1.45" height="45.3" fill="#56636d"/><rect x="471.88" y="0" width="1.45" height="45.3" fill="#56636d"/><rect x="528.58" y="0" width="1.45" height="45.3" fill="#56636d"/><rect x="585.28" y="0" width="1.45" height="45.3" fill="#56636d"/><rect x="741.78" y="0" width="1.45" height="45.3" fill="#56636d"/><rect x="896.78" y="0" width="1.45" height="45.3" fill="#56636d"/><rect x="970.78" y="0" width="1.45" height="45.3" fill="#56636d"/><rect x="1044.78" y="0" width="1.45" height="45.3" fill="#56636d"/><rect x="1158.78" y="0" width="1.45" height="45.3" fill="#56636d"/><rect x="1286.78" y="0" width="1.45" height="45.3" fill="#56636d"/><rect x="1405.78" y="0" width="1.45" height="45.3" fill="#56636d"/><rect x="1605.03" y="0" width="1.45" height="45.3" fill="#56636d"/><rect x="0" y="77.99" width="1695" height="1.45" fill="#5a6874"/><rect x="0" y="112.13" width="1695" height="1.45" fill="#5a6874"/><rect x="0" y="146.27" width="1695" height="1.45" fill="#5a6874"/><rect x="0" y="180.41" width="1695" height="1.45" fill="#5a6874"/><rect x="0" y="214.55" width="1695" height="1.45" fill="#5a6874"/></svg>
<div class="a" style="left:3px;top:208.80000000000007px;width:855px;height:9px;border-radius:5px;background:rgba(160,178,190,0.75)"></div>
</div>
<div class="a" style="left:267px;top:657px;width:34px;height:34px;border-radius:50%;background:#2c4c62"></div>
<svg class="a" style="left:278px;top:666px" width="12" height="16" viewBox="0 0 12 16"><path d="M9 2 L3 8 L9 14" fill="none" stroke="#fff" stroke-width="2.4"/></svg>
<div class="a" style="left:14px;top:1212px;width:256px;height:45px;border:2px solid #e6e9eb;border-radius:3px;background:#172a3a"></div>
<svg class="a" style="left:78px;top:1227px" width="16" height="16" viewBox="0 0 16 16"><path d="M8 1.5 V14.5 M1.5 8 H14.5" stroke="#fff" stroke-width="2"/></svg>
<div class="t" style="left:109px;top:1224px;font-size:19.5px;line-height:22px;color:#fff">New Folder</div></div></body></html>
